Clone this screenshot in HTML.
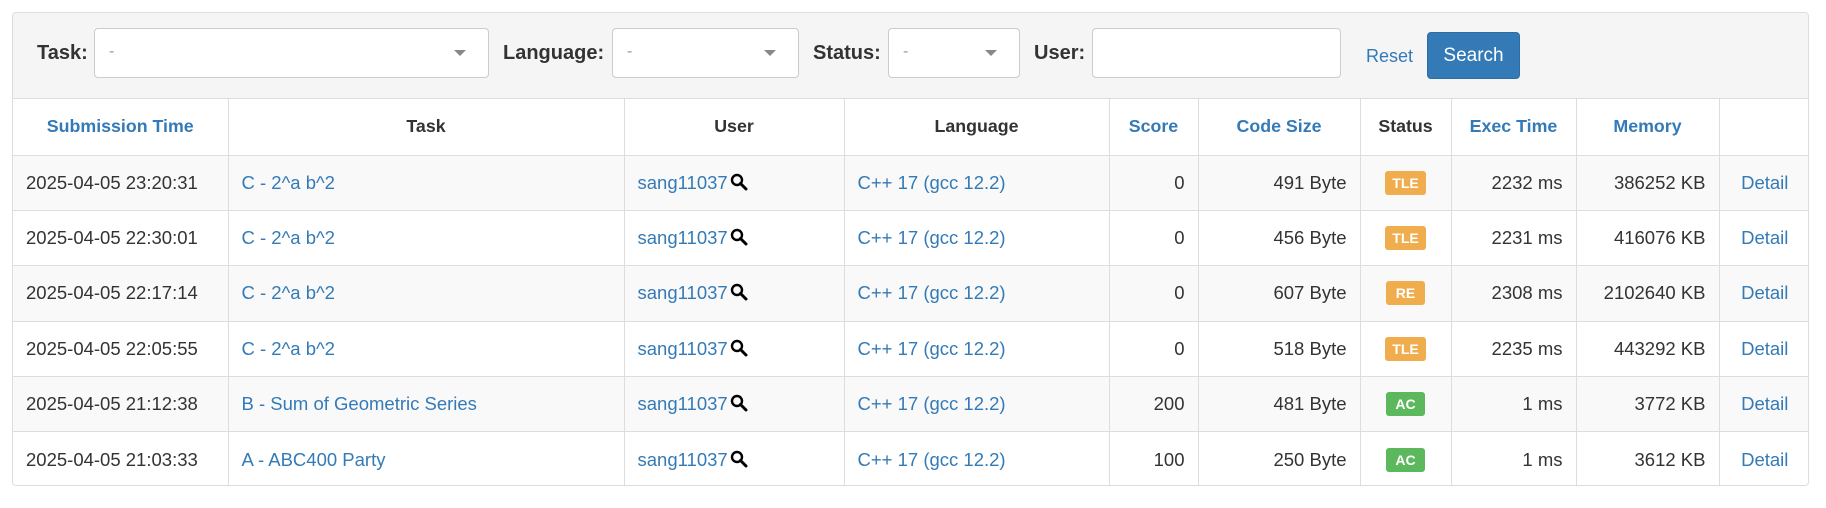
<!DOCTYPE html>
<html><head><meta charset="utf-8"><style>
*{box-sizing:border-box}
body{margin:0;width:1826px;height:508px;background:#fff;font-family:"Liberation Sans",sans-serif;color:#333;position:relative;overflow:hidden}
.panel{position:absolute;left:12px;top:12px;width:1797px;height:474px;border:1px solid #ddd;border-radius:4px;overflow:hidden}
.filter{height:86px;background:#f5f5f5;border-bottom:1px solid #ddd;position:relative}
.lbl{position:absolute;top:27px;line-height:50px;font-weight:bold;font-size:20px;color:#333}
.sel,.inp{position:absolute;top:15px;height:50px;background:#fff;border:1px solid #ccc;border-radius:4px}
.sel span{position:absolute;left:14px;top:14px;color:#999;font-size:16px}
.sel i{position:absolute;right:22px;top:21px;border-left:6px solid transparent;border-right:6px solid transparent;border-top:6px solid #888}
a{color:#337ab7;text-decoration:none}
.btn{position:absolute;left:1414px;top:19px;width:93px;height:47px;background:#337ab7;border:1px solid #2e6da4;border-radius:4px;color:#fff;font-size:19px;line-height:45px;text-align:center}
table{border-collapse:collapse;table-layout:fixed;width:1797px;font-size:18.5px}
td,th{border-right:1px solid #ddd;border-bottom:1px solid #ddd;padding:0 13px;white-space:nowrap;overflow:hidden}
td:last-child,th:last-child{border-right:none}
th{height:56px;font-size:17.8px;text-align:center}
td{height:55.4px}
tbody tr:nth-child(odd){background:#f9f9f9}
tr:last-child td{border-bottom:none}
.r{text-align:right}.c{text-align:center}
.b{display:inline-block;color:#fff;font-weight:bold;font-size:14px;padding:4px 7px;border-radius:3px;line-height:16px}
.tle{background:#f0ad4e}.ac{background:#5cb85c;padding:4px 9px}
svg{vertical-align:-2px;margin-left:2px}
</style></head><body>
<div class="panel">
<div class="filter">
<div class="lbl" style="left:24px;top:15px">Task:</div>
<div class="sel" style="left:81px;width:395px"><span>-</span><i></i></div>
<div class="lbl" style="left:490px;top:15px">Language:</div>
<div class="sel" style="left:599px;width:187px"><span>-</span><i></i></div>
<div class="lbl" style="left:800px;top:15px">Status:</div>
<div class="sel" style="left:875px;width:132px"><span>-</span><i></i></div>
<div class="lbl" style="left:1021px;top:15px">User:</div>
<div class="inp" style="left:1079px;width:249px"></div>
<a style="position:absolute;left:1353px;top:31px;font-size:18px;line-height:24px">Reset</a>
<div class="btn">Search</div>
</div>
<table>
<colgroup><col style="width:215px"><col style="width:396px"><col style="width:220px"><col style="width:265px"><col style="width:89px"><col style="width:162px"><col style="width:91px"><col style="width:125px"><col style="width:143px"><col></colgroup>
<thead><tr><th><a>Submission Time</a></th><th>Task</th><th>User</th><th>Language</th><th><a>Score</a></th><th><a>Code Size</a></th><th>Status</th><th><a>Exec Time</a></th><th><a>Memory</a></th><th></th></tr></thead>
<tbody>
<tr><td>2025-04-05 23:20:31</td><td><a>C - 2^a b^2</a></td><td><a>sang11037</a><svg width="18" height="18" viewBox="0 0 18 18"><circle cx="7" cy="7" r="5" fill="none" stroke="#000" stroke-width="2.4"/><path d="M10.5 10.5L16 16" stroke="#000" stroke-width="3" stroke-linecap="round"/></svg></td><td><a>C++ 17 (gcc 12.2)</a></td><td class="r">0</td><td class="r">491 Byte</td><td class="c"><span class="b tle">TLE</span></td><td class="r">2232 ms</td><td class="r">386252 KB</td><td class="c"><a>Detail</a></td></tr>
<tr><td>2025-04-05 22:30:01</td><td><a>C - 2^a b^2</a></td><td><a>sang11037</a><svg width="18" height="18" viewBox="0 0 18 18"><circle cx="7" cy="7" r="5" fill="none" stroke="#000" stroke-width="2.4"/><path d="M10.5 10.5L16 16" stroke="#000" stroke-width="3" stroke-linecap="round"/></svg></td><td><a>C++ 17 (gcc 12.2)</a></td><td class="r">0</td><td class="r">456 Byte</td><td class="c"><span class="b tle">TLE</span></td><td class="r">2231 ms</td><td class="r">416076 KB</td><td class="c"><a>Detail</a></td></tr>
<tr><td>2025-04-05 22:17:14</td><td><a>C - 2^a b^2</a></td><td><a>sang11037</a><svg width="18" height="18" viewBox="0 0 18 18"><circle cx="7" cy="7" r="5" fill="none" stroke="#000" stroke-width="2.4"/><path d="M10.5 10.5L16 16" stroke="#000" stroke-width="3" stroke-linecap="round"/></svg></td><td><a>C++ 17 (gcc 12.2)</a></td><td class="r">0</td><td class="r">607 Byte</td><td class="c"><span class="b tle" style="padding:4px 10px">RE</span></td><td class="r">2308 ms</td><td class="r">2102640 KB</td><td class="c"><a>Detail</a></td></tr>
<tr><td>2025-04-05 22:05:55</td><td><a>C - 2^a b^2</a></td><td><a>sang11037</a><svg width="18" height="18" viewBox="0 0 18 18"><circle cx="7" cy="7" r="5" fill="none" stroke="#000" stroke-width="2.4"/><path d="M10.5 10.5L16 16" stroke="#000" stroke-width="3" stroke-linecap="round"/></svg></td><td><a>C++ 17 (gcc 12.2)</a></td><td class="r">0</td><td class="r">518 Byte</td><td class="c"><span class="b tle">TLE</span></td><td class="r">2235 ms</td><td class="r">443292 KB</td><td class="c"><a>Detail</a></td></tr>
<tr><td>2025-04-05 21:12:38</td><td><a>B - Sum of Geometric Series</a></td><td><a>sang11037</a><svg width="18" height="18" viewBox="0 0 18 18"><circle cx="7" cy="7" r="5" fill="none" stroke="#000" stroke-width="2.4"/><path d="M10.5 10.5L16 16" stroke="#000" stroke-width="3" stroke-linecap="round"/></svg></td><td><a>C++ 17 (gcc 12.2)</a></td><td class="r">200</td><td class="r">481 Byte</td><td class="c"><span class="b ac">AC</span></td><td class="r">1 ms</td><td class="r">3772 KB</td><td class="c"><a>Detail</a></td></tr>
<tr><td>2025-04-05 21:03:33</td><td><a>A - ABC400 Party</a></td><td><a>sang11037</a><svg width="18" height="18" viewBox="0 0 18 18"><circle cx="7" cy="7" r="5" fill="none" stroke="#000" stroke-width="2.4"/><path d="M10.5 10.5L16 16" stroke="#000" stroke-width="3" stroke-linecap="round"/></svg></td><td><a>C++ 17 (gcc 12.2)</a></td><td class="r">100</td><td class="r">250 Byte</td><td class="c"><span class="b ac">AC</span></td><td class="r">1 ms</td><td class="r">3612 KB</td><td class="c"><a>Detail</a></td></tr>
</tbody></table>
</div>
</body></html>
